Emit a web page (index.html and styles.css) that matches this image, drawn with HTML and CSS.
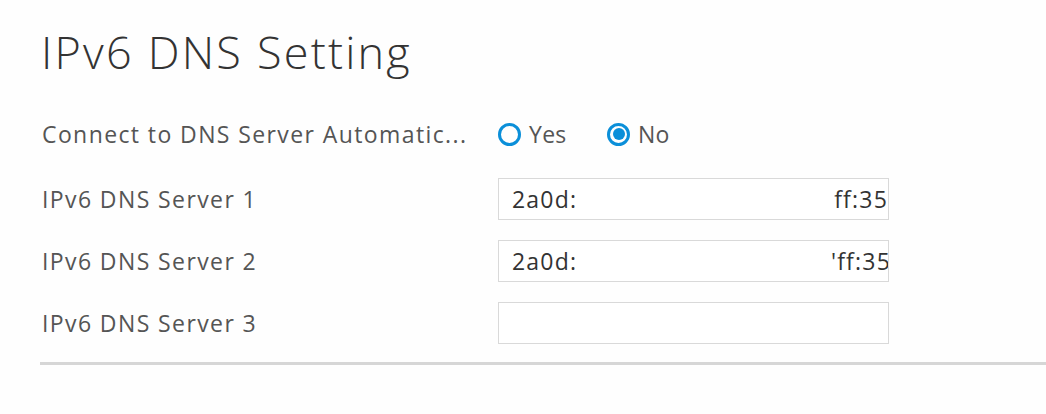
FILE: index.html
```html
<!DOCTYPE html>
<html lang="en">

<head>
    <meta charset="UTF-8">
    <meta name="viewport" content="width=device-width, initial-scale=1.0">
    <title>IPv6 DNS Setting</title>
    <link rel="stylesheet" href="styles.css">
</head>

<body>
    <div class="page">
        <p class="title">IPv6 DNS Setting</p>

        <div class="row rowRadio">
            <span class="label">Connect to DNS Server Automatic...</span>
            <span class="radios">
                <label class="radio">
                    <span class="circle"></span>
                    <span>Yes</span>
                </label>
                <label class="radio">
                    <span class="circle checked"></span>
                    <span>No</span>
                </label>
            </span>
        </div>

        <div class="row">
            <span class="label">IPv6 DNS Server 1</span>
            <div class="field">
                <span>2a0d:</span>
                <span class="tail">ff:35</span>
            </div>
        </div>

        <div class="row">
            <span class="label">IPv6 DNS Server 2</span>
            <div class="field">
                <span>2a0d:</span>
                <span class="tail cut">'ff:35</span>
            </div>
        </div>

        <div class="row">
            <span class="label">IPv6 DNS Server 3</span>
            <div class="field"></div>
        </div>

        <div class="line"></div>
    </div>
</body>

</html>
```

FILE: styles.css
```css
body {
    margin: 0px;
    background: #fefefe;
    font-family: "Open Sans", "Noto Sans", sans-serif;
}

.page {
    padding-left: 40px;
}

.title {
    margin: 22px 0px 0px 1px;
    font-size: 45px;
    line-height: 60px;
    letter-spacing: 2.2px;
    color: #333;
    font-weight: 300;
}

.row {
    height: 42px;
    display: flex;
    flex-direction: row;
    align-items: center;
    margin-top: 20px;
}

.rowRadio {
    margin-top: 31px;
    margin-bottom: 23px;
}

.label {
    width: 458px;
    flex-shrink: 0;
    box-sizing: border-box;
    padding-left: 2px;
    font-size: 23px;
    letter-spacing: 1.4px;
    color: #555;
    white-space: nowrap;
}

.radios {
    display: flex;
    flex-direction: row;
    gap: 39px;
}

.radio {
    display: flex;
    align-items: center;
    gap: 8px;
    font-size: 23px;
    letter-spacing: 0.3px;
    color: #555;
    width: 70px;
}

.circle {
    width: 17px;
    height: 17px;
    border: 3px solid #0b8fd9;
    border-radius: 50%;
    box-sizing: content-box;
    position: relative;
}

.checked::after {
    content: '';
    position: absolute;
    left: 2.5px;
    top: 2.5px;
    width: 12px;
    height: 12px;
    border-radius: 50%;
    background: #0b8fd9;
}

.field {
    width: 391px;
    height: 42px;
    box-sizing: border-box;
    border: 1px solid #d9d9d9;
    background: white;
    display: flex;
    flex-direction: row;
    justify-content: space-between;
    align-items: center;
    padding-left: 13px;
    overflow: hidden;
    font-size: 23px;
    letter-spacing: 1.2px;
    color: #333;
    white-space: nowrap;
}

.tail {
    margin-right: 0px;
}

.cut {
    margin-right: -3px;
}

.line {
    height: 3px;
    background: #d6d6d6;
    margin-top: 18px;
}
```
